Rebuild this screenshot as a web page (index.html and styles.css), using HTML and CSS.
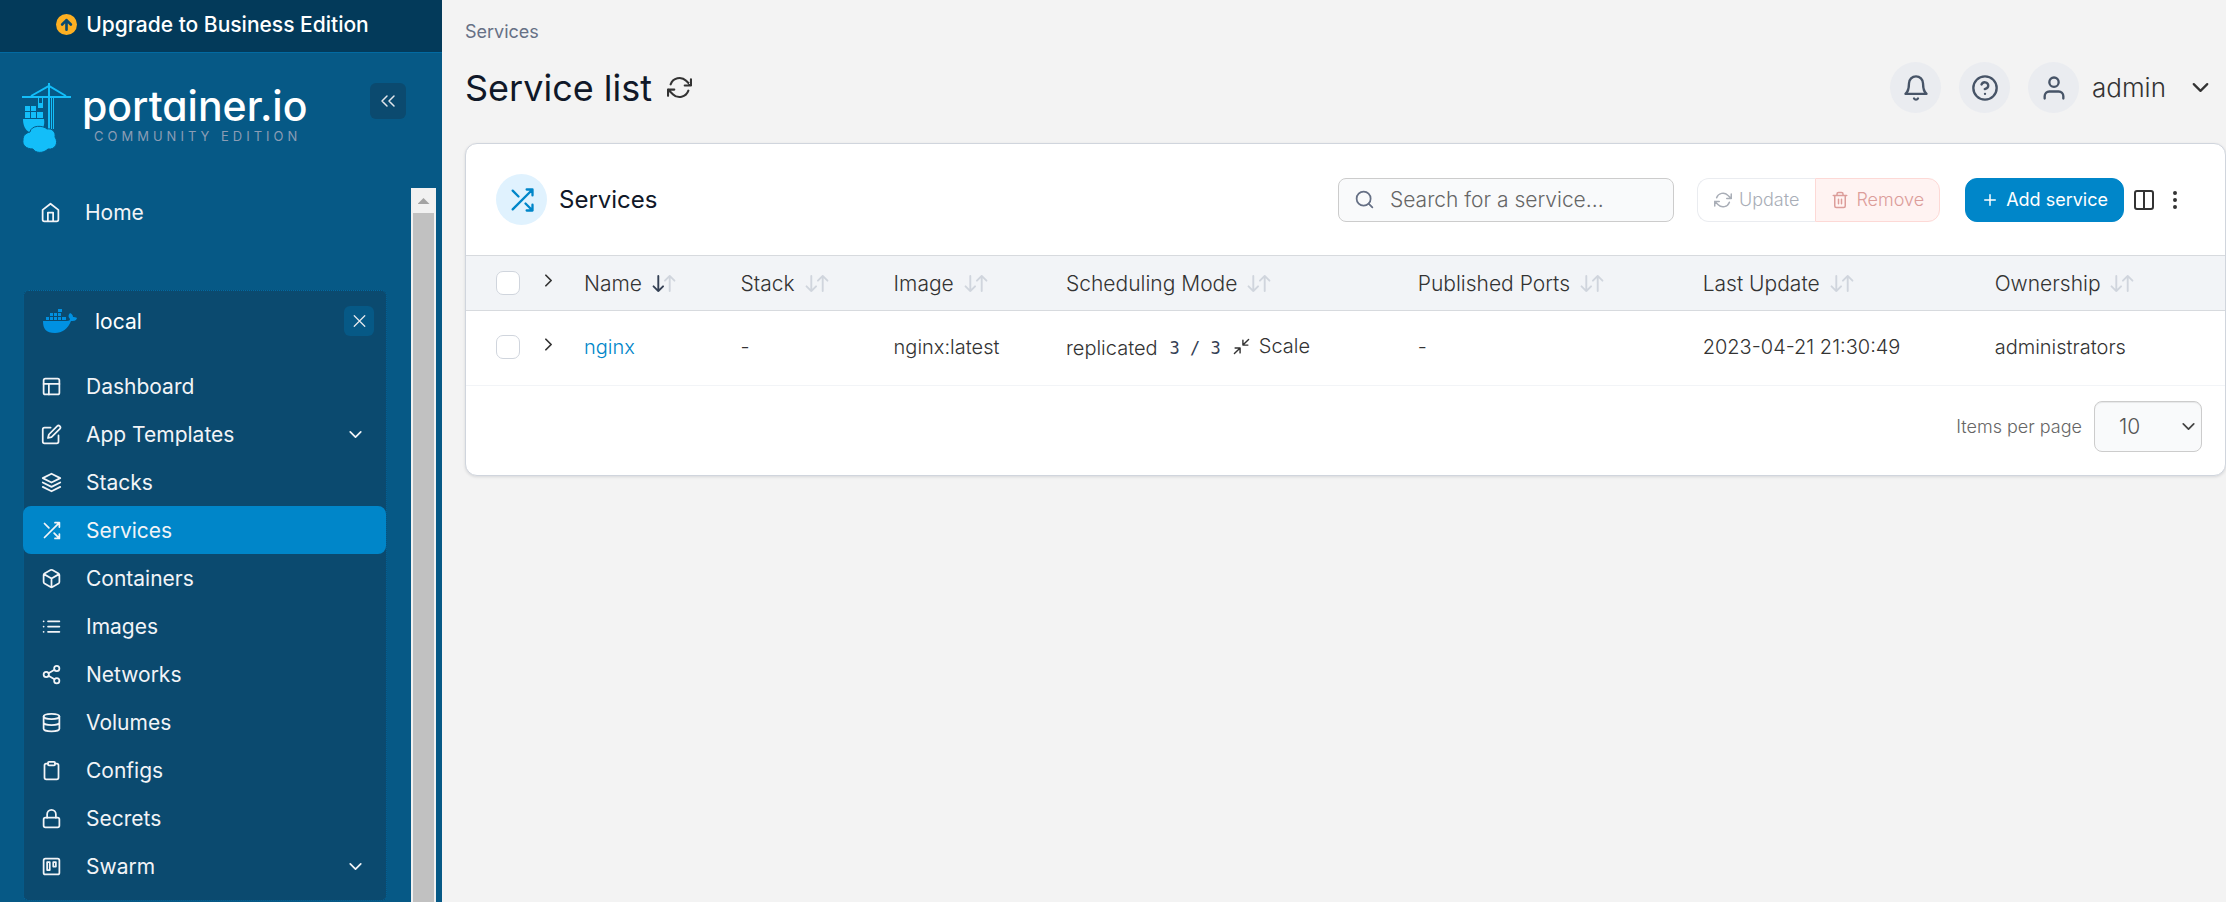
FILE: index.html
```
<!DOCTYPE html>
<html lang="en">

<head>
  <meta charset="utf-8">
  <title>Portainer</title>
  <link rel="stylesheet" href="styles.css">
</head>

<body>
  <!-- shared icons -->
  <svg class="sprite" width="0" height="0">
    <symbol id="shuffle" viewBox="0 0 24 24"><path d="M16 3h5v5M4 20 21 3M21 16v5h-5M15 15l6 6M4 4l5 5"/></symbol>
    <symbol id="refresh" viewBox="0 0 24 24"><path d="M23 4v6h-6M1 20v-6h6M3.5 9a9 9 0 0 1 14.9-3.4L23 10M1 14l4.6 4.4A9 9 0 0 0 20.5 15"/></symbol>
    <symbol id="down" viewBox="0 0 24 24"><path d="m6 9 6 6 6-6"/></symbol>
    <symbol id="right" viewBox="0 0 24 24"><path d="m9 18 6-6-6-6"/></symbol>
    <symbol id="sort" viewBox="0 0 24 20"><path class="desc" d="M6 2v16M1 13l5 5 5-5"/><path class="asc" d="M18 18V2M13 7l5-5 5 5"/></symbol>
  </svg>

  <div class="layout">
    <aside class="sidebar">
      <a href="#" class="upgrade">
        <svg class="upgrade-icon" viewBox="0 0 24 24"><circle cx="12" cy="12" r="12"/><path d="M12 18V7M7 12l5-5 5 5"/></svg>
        Upgrade to Business Edition
      </a>

      <div class="brand">
        <svg class="crane" viewBox="0 0 49 70">
          <path d="M0 13h49v2H0zM26 0h2v46h-2zM29 15h1v31h-1zM31 15h1v31h-1z"/>
          <path class="cable" d="M9 13 27 3l17 10"/>
          <path d="M16 15h1v5h3v-5h1v10h-5zM3 23h5v5H3zM9 23h5v5H9zM3 29h5v6H3zM9 29h5v6H9zM15 29h6v6h-6z"/>
          <path d="M1 36h21c1 6-1 10-4 13H7C3 47 1 42 1 36z"/>
          <path class="cloud" d="M8 49c1-7 13-7 17-3 5-1 9 3 8 8 4 6 0 13-7 12-5 5-13 4-15 0C4 66 0 62 1 57c0-5 3-7 7-8z"/>
        </svg>
        <div class="brand-text">
          <span class="brand-name">portainer.io</span>
          <span class="brand-edition">COMMUNITY EDITION</span>
        </div>
        <button class="collapse" aria-label="Collapse sidebar">
          <svg class="icon" viewBox="0 0 24 24"><path d="m11 17-5-5 5-5M18 17l-5-5 5-5"/></svg>
        </button>
      </div>

      <div class="nav-wrap">
        <nav class="nav">
          <a href="#" class="nav-item home">
            <svg class="icon" viewBox="0 0 24 24"><path d="M3 9l9-7 9 7v11a2 2 0 0 1-2 2H5a2 2 0 0 1-2-2zM9 22V12h6v10"/></svg>
            Home
          </a>

          <div class="env">
            <div class="env-head">
              <svg class="docker" viewBox="0 0 34 25">
                <path d="M0 12h24c2 0 3-1 3-2-2-2-2-4 0-6 2 1 3 2 3 4 1 0 3 0 4 1-1 3-3 3-6 3-3 8-9 12-16 12C3 24 0 20 0 12z"/>
                <path d="M3 8h3v3H3zM7 8h3v3H7zM11 8h3v3h-3zM15 8h3v3h-3zM19 8h4v3h-4zM7 4h3v3H7zM11 4h3v3h-3zM15 4h3v3h-3zM15 0h4v3h-4z"/>
              </svg>
              <span class="env-name">local</span>
              <button class="env-close" aria-label="Close environment">
                <svg class="icon" viewBox="0 0 24 24"><path d="M18 6 6 18M6 6l12 12"/></svg>
              </button>
            </div>

            <a href="#" class="nav-item">
              <svg class="icon" viewBox="0 0 24 24"><rect x="3" y="3" width="18" height="18" rx="2"/><path d="M3 9h18M9 21V9"/></svg>
              Dashboard
            </a>
            <a href="#" class="nav-item">
              <svg class="icon" viewBox="0 0 24 24"><path d="M11 4H4a2 2 0 0 0-2 2v14a2 2 0 0 0 2 2h14a2 2 0 0 0 2-2v-7"/><path d="M18.500 2.500a2.100 2.100 0 0 1 3 3L12 15l-4 1 1-4z"/></svg>
              App Templates
              <svg class="icon arrow"><use href="#down"/></svg>
            </a>
            <a href="#" class="nav-item">
              <svg class="icon" viewBox="0 0 24 24"><path d="M12 2 2 7l10 5 10-5zM2 17l10 5 10-5M2 12l10 5 10-5"/></svg>
              Stacks
            </a>
            <a href="#" class="nav-item active">
              <svg class="icon"><use href="#shuffle"/></svg>
              Services
            </a>
            <a href="#" class="nav-item">
              <svg class="icon" viewBox="0 0 24 24"><path d="M21 16V8a2 2 0 0 0-1-1.700l-7-4a2 2 0 0 0-2 0l-7 4A2 2 0 0 0 3 8v8a2 2 0 0 0 1 1.700l7 4a2 2 0 0 0 2 0l7-4a2 2 0 0 0 1-1.700zM3.300 7l8.700 5 8.700-5M12 22V12"/></svg>
              Containers
            </a>
            <a href="#" class="nav-item">
              <svg class="icon" viewBox="0 0 24 24"><path d="M8 6h13M8 12h13M8 18h13M3 6h.01M3 12h.01M3 18h.01"/></svg>
              Images
            </a>
            <a href="#" class="nav-item">
              <svg class="icon" viewBox="0 0 24 24"><circle cx="18" cy="5" r="3"/><circle cx="6" cy="12" r="3"/><circle cx="18" cy="19" r="3"/><path d="m8.600 13.500 6.800 4M15.400 6.500l-6.800 4"/></svg>
              Networks
            </a>
            <a href="#" class="nav-item">
              <svg class="icon" viewBox="0 0 24 24"><ellipse cx="12" cy="5" rx="9" ry="3"/><path d="M21 12c0 1.700-4 3-9 3s-9-1.300-9-3M3 5v14c0 1.700 4 3 9 3s9-1.300 9-3V5"/></svg>
              Volumes
            </a>
            <a href="#" class="nav-item">
              <svg class="icon" viewBox="0 0 24 24"><path d="M16 4h2a2 2 0 0 1 2 2v14a2 2 0 0 1-2 2H6a2 2 0 0 1-2-2V6a2 2 0 0 1 2-2h2"/><rect x="8" y="2" width="8" height="4" rx="1"/></svg>
              Configs
            </a>
            <a href="#" class="nav-item">
              <svg class="icon" viewBox="0 0 24 24"><rect x="3" y="11" width="18" height="11" rx="2"/><path d="M7 11V7a5 5 0 0 1 10 0v4"/></svg>
              Secrets
            </a>
            <a href="#" class="nav-item">
              <svg class="icon" viewBox="0 0 24 24"><rect x="3" y="3" width="18" height="18" rx="2"/><path d="M7 7h3v9H7zM14 7h3v5h-3z"/></svg>
              Swarm
              <svg class="icon arrow"><use href="#down"/></svg>
            </a>
          </div>
        </nav>
        <div class="scrollbar">
          <span class="scroll-up"></span>
          <span class="scroll-thumb"></span>
        </div>
      </div>
    </aside>

    <main class="content">
      <header class="page-header">
        <div class="crumb">Services</div>
        <div class="title-row">
          <h1>Service list</h1>
          <button class="plain reload" aria-label="Reload"><svg class="icon"><use href="#refresh"/></svg></button>
          <div class="user-menu">
            <button class="round" aria-label="Notifications"><svg class="icon" viewBox="0 0 24 24"><path d="M18 8A6 6 0 0 0 6 8c0 7-3 9-3 9h18s-3-2-3-9M13.700 21a2 2 0 0 1-3.400 0"/></svg></button>
            <button class="round" aria-label="Help"><svg class="icon" viewBox="0 0 24 24"><circle cx="12" cy="12" r="10"/><path d="M9 9a3 3 0 0 1 5.800 1c0 2-3 3-3 3M12 17h.01"/></svg></button>
            <button class="user">
              <span class="round"><svg class="icon" viewBox="0 0 24 24"><path d="M20 21v-2a4 4 0 0 0-4-4H8a4 4 0 0 0-4 4v2"/><circle cx="12" cy="7" r="4"/></svg></span>
              admin
              <svg class="icon user-arrow"><use href="#down"/></svg>
            </button>
          </div>
        </div>
      </header>

      <section class="card">
        <div class="card-header">
          <span class="round card-icon"><svg class="icon"><use href="#shuffle"/></svg></span>
          <h2>Services</h2>
          <label class="search">
            <svg class="icon" viewBox="0 0 24 24"><circle cx="11" cy="11" r="8"/><path d="m21 21-4.300-4.300"/></svg>
            <input type="text" placeholder="Search for a service..." aria-label="Search for a service">
          </label>
          <div class="btn-group">
            <button class="btn btn-update" disabled><svg class="icon"><use href="#refresh"/></svg>Update</button>
            <button class="btn btn-remove" disabled><svg class="icon" viewBox="0 0 24 24"><path d="M3 6h18M19 6v14a2 2 0 0 1-2 2H7a2 2 0 0 1-2-2V6M8 6V4a2 2 0 0 1 2-2h4a2 2 0 0 1 2 2v2M10 11v6M14 11v6"/></svg>Remove</button>
          </div>
          <button class="btn btn-add"><svg class="icon" viewBox="0 0 24 24"><path d="M12 5v14M5 12h14"/></svg>Add service</button>
          <button class="plain columns" aria-label="Columns"><svg class="icon" viewBox="0 0 24 24"><rect x="3" y="3" width="18" height="18" rx="2"/><path d="M12 3v18"/></svg></button>
          <button class="plain more" aria-label="Settings"><svg class="icon" viewBox="0 0 24 24"><circle cx="12" cy="5" r="1"/><circle cx="12" cy="12" r="1"/><circle cx="12" cy="19" r="1"/></svg></button>
        </div>

        <table>
          <colgroup>
            <col class="c-check"><col class="c-expand"><col class="c-name"><col class="c-stack"><col class="c-image">
            <col class="c-mode"><col class="c-ports"><col class="c-update"><col>
          </colgroup>
          <thead>
            <tr>
              <th class="check"><input type="checkbox" aria-label="Select all"></th>
              <th class="expand"><button class="plain" aria-label="Expand all"><svg class="icon"><use href="#right"/></svg></button></th>
              <th>Name <svg class="sort sorted"><use href="#sort"/></svg></th>
              <th>Stack <svg class="sort"><use href="#sort"/></svg></th>
              <th>Image <svg class="sort"><use href="#sort"/></svg></th>
              <th>Scheduling Mode <svg class="sort"><use href="#sort"/></svg></th>
              <th>Published Ports <svg class="sort"><use href="#sort"/></svg></th>
              <th>Last Update <svg class="sort"><use href="#sort"/></svg></th>
              <th>Ownership <svg class="sort"><use href="#sort"/></svg></th>
            </tr>
          </thead>
          <tbody>
            <tr>
              <td class="check"><input type="checkbox" aria-label="Select nginx"></td>
              <td class="expand"><button class="plain" aria-label="Expand nginx"><svg class="icon"><use href="#right"/></svg></button></td>
              <td><a href="#">nginx</a></td>
              <td>-</td>
              <td>nginx:latest</td>
              <td>
                <div class="mode">replicated <code>3 / 3</code>
                  <button class="plain scale"><svg class="icon" viewBox="0 0 24 24"><path d="M22 2l-8 8M14 3v7h7M2 22l8-8M3 14h7v7"/></svg>Scale</button>
                </div>
              </td>
              <td>-</td>
              <td>2023-04-21 21:30:49</td>
              <td>administrators</td>
            </tr>
          </tbody>
        </table>

        <div class="card-footer">
          <label for="perPage">Items per page</label>
          <span class="select-wrap">
            <select id="perPage">
              <option>10</option>
              <option>25</option>
              <option>50</option>
              <option>100</option>
            </select>
            <svg class="icon"><use href="#down"/></svg>
          </span>
        </div>
      </section>
    </main>
  </div>
</body>

</html>
```
FILE: styles.css
```
* {
  box-sizing: border-box;
}

body {
  margin: 0;
  font-family: Inter, sans-serif;
  font-size: 20px;
  color: #333;
  background-color: #f3f3f3;
}

a {
  text-decoration: none;
}

button,
input,
select {
  font-family: inherit;
}

button {
  cursor: pointer;
}

.sprite {
  position: absolute;
}

.icon {
  width: 21px;
  height: 21px;
  flex: none;
  fill: none;
  stroke: currentColor;
  stroke-width: 2;
  stroke-linecap: round;
  stroke-linejoin: round;
}

.plain {
  display: inline-flex;
  align-items: center;
  padding: 0;
  border: 0;
  background: none;
  color: #333;
}

.layout {
  display: flex;
  height: 100vh;
  overflow: hidden;
}

/* sidebar */
.sidebar {
  display: flex;
  flex-direction: column;
  width: 442px;
  flex: none;
  background-color: #065986;
  color: #fff;
}

.upgrade {
  display: flex;
  align-items: center;
  justify-content: center;
  gap: 9px;
  height: 53px;
  padding-bottom: 3px;
  padding-right: 17px;
  border-bottom: 1px solid #026aa2;
  background-color: #033a5a;
  color: #fff;
  font-weight: 500;
  font-size: 21px;
}

.upgrade-icon {
  width: 21px;
  height: 21px;
}

.upgrade-icon circle {
  fill: #fdb022;
}

.upgrade-icon path {
  fill: none;
  stroke: #0b4a6f;
  stroke-width: 3;
  stroke-linecap: round;
  stroke-linejoin: round;
}

.brand {
  display: flex;
  align-items: flex-start;
  height: 135px;
  padding: 30px 36px 0 22px;
}

.crane {
  width: 49px;
  height: 70px;
  fill: #13bef9;
}

.cable {
  fill: none;
  stroke: #13bef9;
  stroke-width: 2;
}

.cloud {
  stroke: #065986;
}

.brand-text {
  display: flex;
  flex-direction: column;
  margin-left: 11px;
}

.brand-name {
  font-size: 41px;
  line-height: 47px;
  font-weight: 500;
  font-feature-settings: "cv11";
}

.brand-edition {
  padding-left: 12px;
  font-size: 13px;
  line-height: 12px;
  letter-spacing: 4px;
  color: #8b9db5;
}

.collapse,
.env-close {
  display: flex;
  align-items: center;
  justify-content: center;
  margin-left: auto;
  padding: 0;
  border: 0;
  border-radius: 6px;
  background-color: #0b4a6f;
  color: #e4e7ec;
}

.collapse {
  width: 36px;
  height: 36px;
}

.env-close {
  width: 30px;
  height: 30px;
  background-color: #065986;
}

.collapse .icon,
.env-close .icon {
  width: 24px;
  height: 24px;
  stroke-width: 1.5;
}

.env-close .icon {
  width: 21px;
}

.nav-wrap {
  display: flex;
  flex: 1;
  min-height: 0;
  padding-right: 6px;
}

.nav {
  flex: 1;
  overflow: hidden;
  padding: 0 24px 0 23px;
}

.nav-item {
  display: flex;
  align-items: center;
  gap: 24px;
  height: 48px;
  padding: 0 20px 0 18px;
  border-radius: 8px;
  color: #f2f4f7;
  font-size: 21px;
}

.home {
  margin-bottom: 54px;
  padding-left: 17px;
}

.active {
  background-color: #0086c9;
}

.arrow {
  margin-left: auto;
}

.env {
  border: 1px dotted #026aa2;
  border-radius: 6px;
  background-color: #0b4a6f;
  padding-bottom: 10px;
}

.env .nav-item {
  margin-left: -1px;
}

.env-head {
  display: flex;
  align-items: center;
  height: 60px;
  margin-bottom: 11px;
  padding: 0 12px 0 19px;
}

.docker {
  width: 34px;
  height: 25px;
  margin-right: 18px;
  fill: #0091e2;
}

.env-name {
  font-size: 21px;
}

.scrollbar {
  display: flex;
  flex-direction: column;
  align-items: center;
  width: 25px;
  background-color: #f1f1f1;
}

.scroll-up {
  width: 12px;
  height: 6px;
  margin: 10px 0 9px;
  background-color: #a3a3a3;
  clip-path: polygon(50% 0, 100% 100%, 0 100%);
}

.scroll-thumb {
  width: 21px;
  flex: 1;
  background-color: #c1c1c1;
}

/* page */
.content {
  flex: 1;
  min-width: 0;
  padding-left: 23px;
}

.page-header {
  height: 143px;
  padding-top: 20px;
}

.crumb {
  font-size: 18px;
  line-height: 24px;
  color: #667085;
}

.title-row {
  display: flex;
  align-items: center;
  height: 51px;
  margin-top: 18px;
}

h1 {
  margin: 0;
  font-size: 36px;
  font-weight: 400;
  color: #101828;
}

.reload {
  margin-left: 15px;
}

.reload .icon {
  width: 25px;
  height: 25px;
}

.user-menu {
  display: flex;
  align-items: center;
  gap: 18px;
  margin-left: auto;
  padding-right: 12px;
}

.round {
  display: flex;
  align-items: center;
  justify-content: center;
  width: 51px;
  height: 51px;
  padding: 0;
  border: 0;
  border-radius: 50%;
  background-color: #eaecf0;
  color: #475467;
}

.round .icon {
  width: 28px;
  height: 28px;
}

.user {
  display: flex;
  align-items: center;
  padding: 0;
  border: 0;
  background: none;
  font-size: 26px;
  font-weight: 300;
  color: #333;
}

.user .round {
  margin-right: 13px;
}

.user-arrow {
  width: 27px;
  height: 27px;
  margin-left: 21px;
}

.card {
  border: 1px solid #d0d5dd;
  border-radius: 12px;
  background-color: #fff;
  box-shadow: 0 1px 3px #10182820;
  overflow: hidden;
}

.card-header {
  display: flex;
  align-items: center;
  height: 111px;
  padding: 0 38px 0 30px;
}

.card-header .card-icon {
  background-color: #e0f2fe;
  color: #0086c9;
}

h2 {
  margin: 0 auto 0 12px;
  font-size: 24px;
  font-weight: 400;
  color: #101828;
}

.search {
  display: flex;
  align-items: center;
  width: 336px;
  height: 44px;
  padding-left: 15px;
  border: 1px solid #ccc;
  border-radius: 8px;
  background-color: #f9fafb;
  color: #667085;
}

.search input {
  flex: 1;
  min-width: 0;
  margin-left: 13px;
  border: 0;
  outline: 0;
  background: none;
  font-size: 21px;
  font-weight: 300;
}

.search input::placeholder {
  color: #666;
}

.btn-group {
  display: flex;
  margin: 0 25px 0 23px;
}

.btn {
  display: flex;
  align-items: center;
  gap: 7px;
  height: 44px;
  padding: 0 15px;
  border: 1px solid #eaecf0;
  border-radius: 12px;
  font-size: 18px;
}

.btn .icon {
  width: 18px;
  height: 18px;
}

.btn-update {
  padding: 0 16px;
  border-right: 0;
  border-radius: 12px 0 0 12px;
  background-color: #fff;
  color: #a9aeb7;
  font-weight: 300;
}

.btn-remove {
  border-color: #fdd9d6;
  border-radius: 0 12px 12px 0;
  background-color: #fff3f2;
  color: #dc9d9a;
  font-weight: 300;
}

.btn-add {
  border-color: #0086c9;
  background-color: #0086c9;
  color: #fff;
}

.columns {
  margin-left: 8px;
}

.columns .icon,
.more .icon {
  width: 24px;
  height: 24px;
}

.more {
  margin-left: 7px;
}

table {
  width: 100%;
  table-layout: fixed;
  border-collapse: collapse;
}

.c-check { width: 64px; }
.c-expand { width: 42px; }
.c-name { width: 8.9%; }
.c-stack { width: 8.7%; }
.c-image { width: 9.8%; }
.c-mode { width: 20%; }
.c-ports { width: 16.2%; }
.c-update { width: 16.6%; }

th,
td {
  padding: 0 0 0 12px;
  text-align: left;
  font-weight: 300;
  white-space: nowrap;
}

th {
  height: 55px;
  border-top: 1px solid #d7dade;
  border-bottom: 1px solid #d7dade;
  background-color: #f2f4f7;
  font-size: 21px;
}

td {
  height: 75px;
  padding-bottom: 2px;
  border-bottom: 1px solid #f2f4f7;
}

td a {
  color: #0086c9;
}

.check {
  padding-left: 30px;
}

.check input {
  appearance: none;
  display: block;
  width: 24px;
  height: 24px;
  margin: 0;
  border: 1px solid #d0d5dd;
  border-radius: 7px;
  background-color: #fff;
}

.expand {
  padding-left: 8px;
}

.sort {
  width: 24px;
  height: 19px;
  margin-left: 4px;
  vertical-align: -2px;
  fill: none;
  stroke: #d0d5dd;
  stroke-width: 2;
  stroke-linecap: round;
  stroke-linejoin: round;
}

.sorted {
  --desc: #344054;
}

.desc {
  stroke: var(--desc, #d0d5dd);
}

.mode {
  display: flex;
  align-items: center;
  padding-top: 2px;
}

code {
  margin: 0 12px;
  font-family: "DejaVu Sans Mono", monospace;
  font-size: 17px;
  color: #344054;
}

.scale {
  gap: 9px;
  padding-bottom: 4px;
  font-size: 20px;
  font-weight: 300;
}

.scale .icon {
  width: 17px;
  height: 17px;
}

.card-footer {
  display: flex;
  align-items: center;
  justify-content: flex-end;
  gap: 12px;
  height: 89px;
  padding: 0 23px 8px 0;
  font-size: 18px;
  font-weight: 300;
  color: #666;
}

.select-wrap {
  display: grid;
  align-items: center;
}

.select-wrap > * {
  grid-area: 1 / 1;
}

.select-wrap .icon {
  justify-self: end;
  margin-right: 3px;
  color: #444;
  pointer-events: none;
}

select {
  appearance: none;
  width: 108px;
  height: 51px;
  padding: 0 24px;
  border: 1px solid #ccc;
  border-radius: 8px;
  background-color: #f9fafb;
  box-shadow: inset 0 1px 1px #00000013;
  color: #555;
  font-size: 21px;
  font-weight: 300;
}
```
